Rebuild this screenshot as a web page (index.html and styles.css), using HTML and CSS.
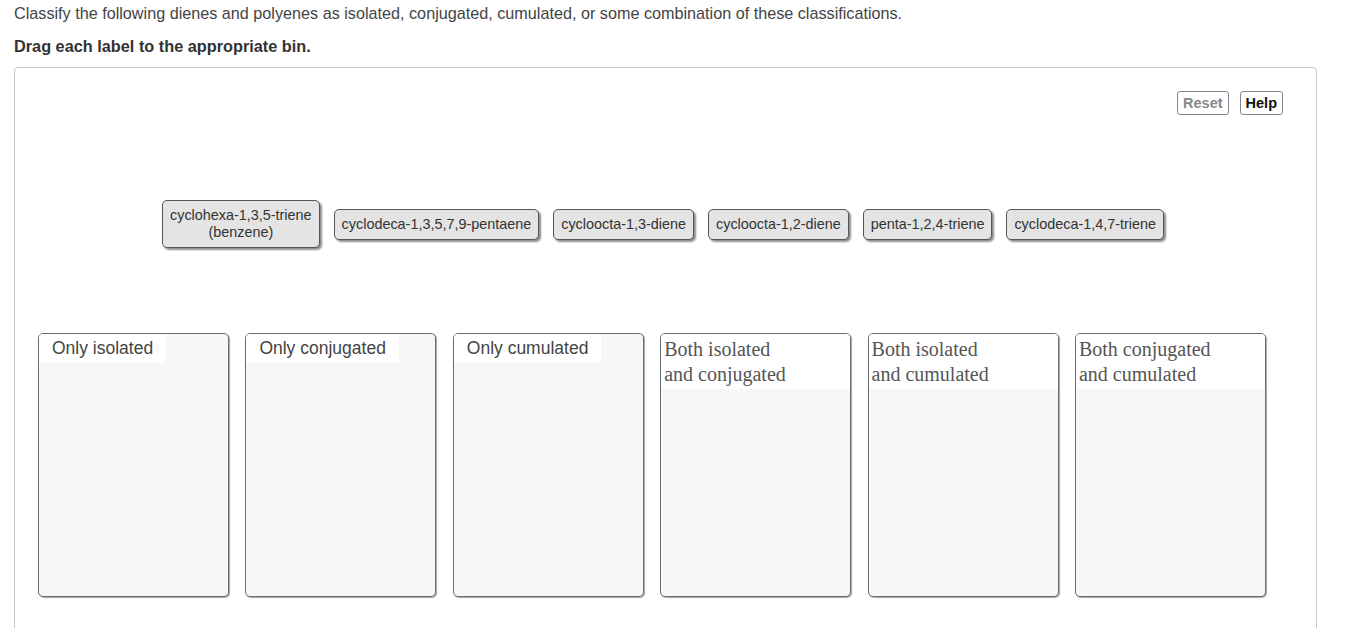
FILE: index.html
```html
<!DOCTYPE html>
<html lang="en">
<head>
    <meta charset="UTF-8">
    <title>Classify dienes and polyenes</title>
    <link rel="stylesheet" href="styles.css">
</head>
<body>
    <div class="page">
        <p class="intro">Classify the following dienes and polyenes as isolated, conjugated, cumulated, or some combination of these classifications.</p>
        <p class="instruct">Drag each label to the appropriate bin.</p>

        <div class="dnd">
            <div class="toolbar">
                <button class="btn btn-reset">Reset</button>
                <button class="btn">Help</button>
            </div>

            <div class="labels">
                <div class="label">cyclohexa-1,3,5-triene<br>(benzene)</div>
                <div class="label">cyclodeca-1,3,5,7,9-pentaene</div>
                <div class="label">cycloocta-1,3-diene</div>
                <div class="label">cycloocta-1,2-diene</div>
                <div class="label">penta-1,2,4-triene</div>
                <div class="label">cyclodeca-1,4,7-triene</div>
            </div>

            <div class="bins">
                <div class="bin"><div class="bin-title">Only isolated</div></div>
                <div class="bin"><div class="bin-title">Only conjugated</div></div>
                <div class="bin"><div class="bin-title">Only cumulated</div></div>
                <div class="bin"><div class="bin-title serif">Both isolated<br>and conjugated</div></div>
                <div class="bin"><div class="bin-title serif">Both isolated<br>and cumulated</div></div>
                <div class="bin"><div class="bin-title serif">Both conjugated<br>and cumulated</div></div>
            </div>
        </div>
    </div>
</body>
</html>
```

FILE: styles.css
```css
body {
    margin: 0;
    font-family: "Liberation Sans", Arial, sans-serif;
    color: #333;
    background: #fff;
    overflow: hidden;
}
.page {
    padding: 4px 14px 0 14px;
}
.intro {
    margin: 0;
    font-size: 16.2px;
    line-height: 18px;
    color: #444;
}
.instruct {
    margin: 15px 0 0 0;
    font-size: 16.3px;
    line-height: 18px;
    font-weight: bold;
    color: #333;
}
.dnd {
    margin-top: 12px;
    width: 1301px;
    height: 620px;
    border: 1px solid #c8c8c8;
    border-radius: 4px;
}
.toolbar {
    display: flex;
    justify-content: flex-end;
    gap: 11px;
    padding: 23px 33px 0 0;
}
.btn {
    height: 24px;
    padding: 0 5px;
    font-family: "Liberation Sans", Arial, sans-serif;
    font-size: 14.5px;
    font-weight: bold;
    color: #111;
    background: #fff;
    border: 1px solid #888;
    border-radius: 3px;
}
.btn-reset {
    color: #888;
}
.labels {
    display: flex;
    justify-content: center;
    align-items: center;
    gap: 14px;
    margin-top: 85px;
    padding-right: 5px;
}
.label {
    padding: 6px 7px;
    font-size: 14.4px;
    line-height: 17px;
    text-align: center;
    color: #333;
    background: #e4e4e4;
    border: 1px solid #555;
    border-radius: 5px;
    box-shadow: 2px 2px 2px rgba(0, 0, 0, 0.45);
}
.bins {
    display: flex;
    gap: 16.4px;
    margin-top: 85px;
    padding-left: 23px;
}
.bin {
    box-sizing: border-box;
    width: 191px;
    height: 264px;
    background: #f7f7f7;
    border: 1px solid #6a6a78;
    border-radius: 5px;
    box-shadow: 1px 1px 1px rgba(0, 0, 0, 0.35);
    overflow: hidden;
}
.bin-title {
    display: inline-block;
    padding: 4px 13px 5px 13px;
    font-size: 17.5px;
    line-height: 20px;
    color: #444;
    background: #fff;
}
.bin-title.serif {
    display: block;
    padding: 3px 3px 2px 3px;
    font-family: "Liberation Serif", "Times New Roman", serif;
    font-size: 20px;
    line-height: 25px;
    color: #555;
}
```
